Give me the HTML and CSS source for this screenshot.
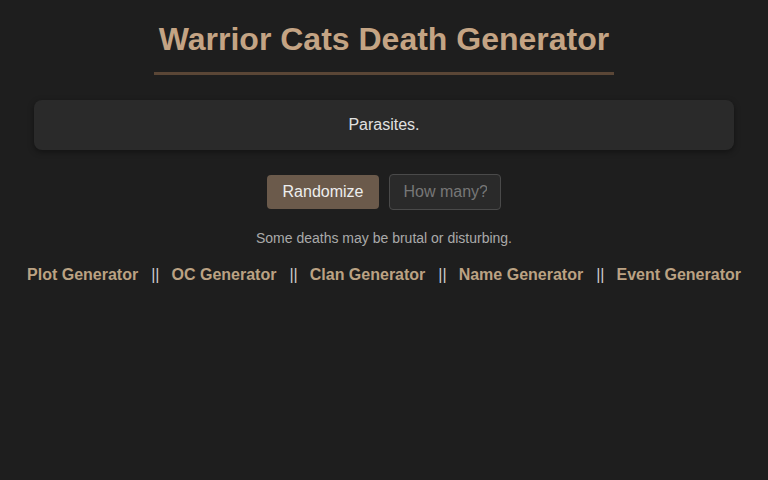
FILE: index.html
```html
<!DOCTYPE html>
<html>
<head>
<meta charset="utf-8">
<link rel="stylesheet" href="styles.css">
</head>
<body>
<main class="page">
  <h1 class="title">Warrior Cats Death Generator</h1>
  <div class="result">Parasites.</div>
  <div class="controls">
    <button class="btn">Randomize</button>
    <input class="count" type="text" placeholder="How many?">
  </div>
  <p class="note">Some deaths may be brutal or disturbing.</p>
  <nav class="links">
    <a href="#">Plot Generator</a><span class="sep">||</span><a href="#">OC Generator</a><span class="sep">||</span><a href="#">Clan Generator</a><span class="sep">||</span><a href="#">Name Generator</a><span class="sep">||</span><a href="#">Event Generator</a>
  </nav>
</main>
</body>
</html>
```
FILE: styles.css
```css
html, body {
  margin: 0;
  padding: 0;
  background: #1e1e1e;
  font-family: "Liberation Sans", Arial, sans-serif;
  color: #ddd;
}
.page {
  display: flex;
  flex-direction: column;
  align-items: center;
  padding: 0 34px;
}
.title {
  margin: 21px 0 0;
  padding: 0 5px 14px;
  font-size: 32px;
  font-weight: bold;
  color: #c4a484;
  border-bottom: 3px solid #5a4636;
}
.result {
  margin-top: 25px;
  width: 100%;
  box-sizing: border-box;
  padding: 16px;
  background: #2a2a2a;
  border-radius: 8px;
  box-shadow: 0 2px 6px rgba(0,0,0,0.4);
  text-align: center;
  font-size: 16px;
  line-height: 18px;
  color: #e0e0e0;
}
.controls {
  margin-top: 24px;
  display: flex;
  align-items: center;
  gap: 10px;
}
.btn {
  font-family: inherit;
  font-size: 16px;
  line-height: 18px;
  padding: 8px 16px;
  background: #6b5a4b;
  color: #eee;
  border: none;
  border-radius: 4px;
}
.count {
  font-family: inherit;
  font-size: 16px;
  line-height: 18px;
  width: 112px;
  box-sizing: border-box;
  padding: 8px 13px;
  background: #2a2a2a;
  color: #ddd;
  border: 1px solid #4a4a4a;
  border-radius: 4px;
}
.count::placeholder {
  color: #777;
}
.note {
  margin: 20px 0 0;
  font-size: 14px;
  line-height: 16px;
  color: #aaa;
}
.links {
  margin-top: 20px;
  font-size: 16px;
  line-height: 18px;
  white-space: nowrap;
}
.links a {
  color: #bba283;
  font-weight: bold;
  text-decoration: none;
}
.sep {
  color: #ccc;
  margin: 0 12px 0 13px;
}
```
